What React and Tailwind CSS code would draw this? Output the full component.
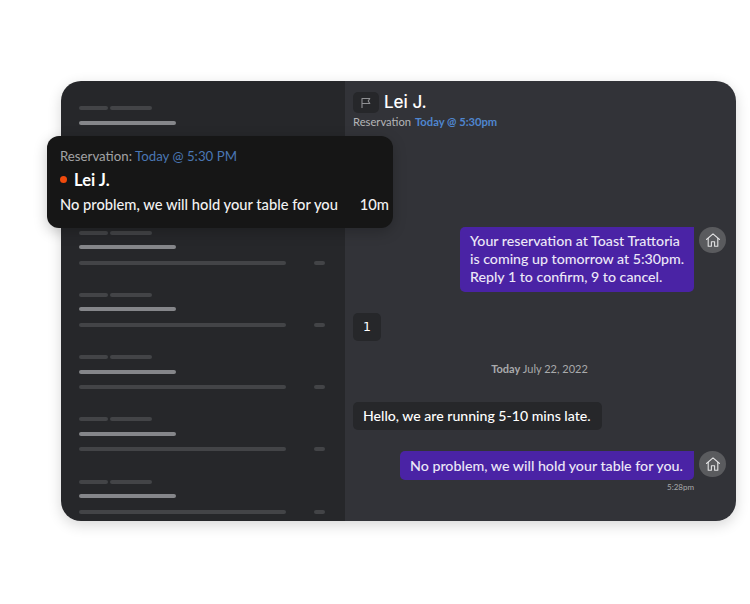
import React from "react";

const font = { fontFamily: 'Lato, "Noto Sans", sans-serif' };

function SidebarRow() {
  return (
    <div className="h-[62.25px] flex flex-col">
      <div className="flex gap-[2px]">
        <div className="h-[4px] w-[29px] rounded-full bg-[#434447]" />
        <div className="h-[4px] w-[42px] rounded-full bg-[#434447]" />
      </div>
      <div className="mt-[10.5px] h-[4px] w-[97px] rounded-full bg-[#85868a]" />
      <div className="mt-[11.5px] flex">
        <div className="h-[4px] w-[207px] rounded-full bg-[#434447]" />
        <div className="ml-[28px] h-[4px] w-[11px] rounded-full bg-[#434447]" />
      </div>
    </div>
  );
}

function HomeAvatar() {
  return (
    <div className="w-[27px] h-[26px] rounded-full bg-[#5a5b5e] flex items-center justify-center shrink-0">
      <svg width="16" height="16" viewBox="0 0 16 16" fill="none" stroke="#e2e2e3" strokeWidth="1.1" strokeLinejoin="round" strokeLinecap="round">
        <path d="M1.5 7.5 8 1.8l6.5 5.7" />
        <path d="M3.2 6.4v7.8h3.2v-4.4h3.2v4.4h3.2V6.4" />
      </svg>
    </div>
  );
}

function FlagIcon() {
  return (
    <svg width="12" height="12" viewBox="0 0 12 12" fill="none" stroke="#8f9093" strokeWidth="1.1" strokeLinejoin="round">
      <path d="M2 11V1.5h7.8L8.2 4l1.6 2.5H2" />
    </svg>
  );
}

export default function App() {
  return (
    <div className="relative w-[750px] h-[604px] bg-white overflow-hidden pt-[81px] pl-[61px]" style={font}>
      <div className="flex w-[675px] h-[440px] rounded-[20px] overflow-hidden shadow-[0_4px_14px_rgba(0,0,0,0.16)]">
        <div className="w-[284px] bg-[#26272a] pl-[18px] pt-[25px] overflow-hidden shrink-0">
          {Array.from({ length: 7 }).map((_, i) => (
            <SidebarRow key={i} />
          ))}
        </div>
        <div className="flex-1 bg-[#323338] pl-[8px] pr-[10px] flex flex-col">
          <div className="flex items-center gap-[5px] pt-[10px]">
            <div className="w-[26px] h-[21px] rounded-[5px] bg-[#26272a] flex items-center justify-center">
              <FlagIcon />
            </div>
            <div className="text-[17px] leading-[23px] font-medium text-white" style={{ fontFamily: "Inter, sans-serif" }}>Lei J.</div>
          </div>
          <div className="text-[11.2px] leading-[16px] whitespace-nowrap">
            <span className="text-[#b4b5b7]">Reservation</span>
            <span className="ml-[4px] font-bold text-[#4f86cf]">Today @ 5:30pm</span>
          </div>

          <div className="mt-[97px] flex justify-end items-start gap-[5px]">
            <div className="w-[234px] h-[65px] rounded-[5px] rounded-tr-none bg-[#4a23a5] pl-[10px] py-[5px] text-[14.2px] font-medium leading-[18px] text-[#ece8f7] whitespace-nowrap">
              Your reservation at Toast Trattoria<br />
              is coming up tomorrow at 5:30pm.<br />
              Reply 1 to confirm, 9 to cancel.
            </div>
            <HomeAvatar />
          </div>

          <div className="mt-[21px] w-[28px] h-[28px] rounded-[5px] bg-[#26272a] flex items-center justify-center text-[12.5px] text-white" style={{ fontFamily: '"DejaVu Sans", sans-serif' }}>1</div>

          <div className="mt-[19px] text-center text-[11px] leading-[18px] text-[#a9aaac]">
            <span className="font-bold">Today</span> July 22, 2022
          </div>

          <div className="mt-[24px] self-start h-[28px] w-[249px] rounded-[5px] bg-[#26272a] flex items-center pl-[10px] text-[14.1px] font-medium text-white whitespace-nowrap">
            Hello, we are running 5-10 mins late.
          </div>

          <div className="mt-[21px] flex justify-end items-start gap-[5px]">
            <div className="w-[294px] h-[29px] rounded-[5px] rounded-tr-none bg-[#4a23a5] flex items-center pl-[10px] text-[14.25px] font-medium text-[#ece8f7] whitespace-nowrap">
              No problem, we will hold your table for you.
            </div>
            <HomeAvatar />
          </div>
          <div className="mt-[2px] pr-[32px] text-right text-[8px] leading-[10px] text-[#a9aaac]">5:28pm</div>
        </div>
      </div>

      <div className="absolute left-[47px] top-[136px] w-[346px] h-[92px] rounded-[12px] bg-[#161616] shadow-[0_4px_14px_rgba(0,0,0,0.22)] pl-[13px] pr-[4px] pt-[10px]">
        <div className="text-[13.25px] leading-[20px] whitespace-nowrap">
          <span className="text-[#a3a3a5]">Reservation: </span>
          <span className="text-[#4a76b4]">Today @ 5:30 PM</span>
        </div>
        <div className="mt-[4px] flex items-center">
          <div className="w-[7px] h-[7px] rounded-full bg-[#f04a0c] mb-[2px]" />
          <div className="ml-[7px] text-[16.5px] leading-[20px] font-bold text-white">Lei J.</div>
        </div>
        <div className="mt-[4px] flex justify-between text-[14.7px] font-medium leading-[20px] text-[#f2f2f2] whitespace-nowrap">
          <span>No problem, we will hold your table for you</span>
          <span>10m</span>
        </div>
      </div>
    </div>
  );
}
